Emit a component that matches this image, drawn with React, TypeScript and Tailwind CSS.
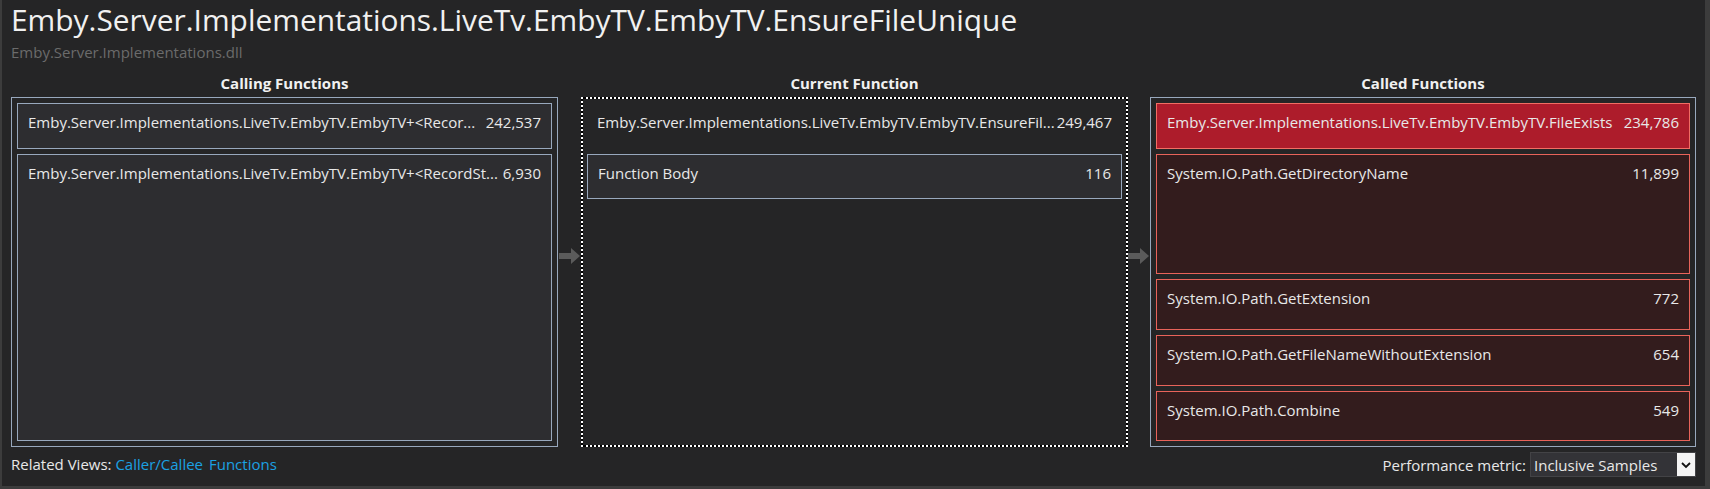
import React from "react";

const font = "font-['Open_Sans','Noto_Sans',sans-serif]";

type Row = { name: string; value: string; h?: string };

function Arrow() {
  return (
    <div className="flex justify-center pt-[150px]">
      <svg width="22" height="18" viewBox="0 0 22 18">
        <path d="M0 6h12V1l9 8-9 8v-5H0z" fill="#5b5b5b" />
      </svg>
    </div>
  );
}

function Box({ row, tone }: { row: Row; tone: "gray" | "hot" | "warm" }) {
  const styles =
    tone === "gray"
      ? "bg-[#2d2d30] border-[#98a8bd]"
      : tone === "hot"
      ? "bg-[#ad1c2b] border-[#f26d63]"
      : "bg-[#331c1d] border-[#e9635a]";
  return (
    <div className={`${styles} ${row.h ?? "flex-1"} border px-[10px] pt-[8px] flex justify-between text-[15px] leading-[20px] text-[#e8e8e8]`}>
      <span className="whitespace-nowrap">{row.name}</span>
      <span className="whitespace-nowrap pl-[1px]">{row.value}</span>
    </div>
  );
}

export default function App() {
  const calling: Row[] = [
    { name: "Emby.Server.Implementations.LiveTv.EmbyTV.EmbyTV+<Recor...", value: "242,537", h: "h-[46px]" },
    { name: "Emby.Server.Implementations.LiveTv.EmbyTV.EmbyTV+<RecordSt...", value: "6,930" },
  ];
  const called: Row[] = [
    { name: "System.IO.Path.GetDirectoryName", value: "11,899", h: "h-[120px]" },
    { name: "System.IO.Path.GetExtension", value: "772", h: "h-[51px]" },
    { name: "System.IO.Path.GetFileNameWithoutExtension", value: "654", h: "h-[51px]" },
    { name: "System.IO.Path.Combine", value: "549" },
  ];

  return (
    <div className={`w-[1710px] h-[489px] bg-[#3c3c3c] pl-[2px] pr-[5px] pb-[3px] ${font}`}>
      <div className="h-full bg-[#252526] px-[9px] flex flex-col text-[#f1f1f1]">
        {/* Title */}
        <div className="h-[42px] pt-[1px] text-[29.9px] leading-[38px] whitespace-nowrap">
          Emby.Server.Implementations.LiveTv.EmbyTV.EmbyTV.EnsureFileUnique
        </div>
        <div className="h-[31px] text-[15px] leading-[20px] text-[#6b6b6b]">Emby.Server.Implementations.dll</div>

        {/* Headers */}
        <div className="h-[24px] flex text-[15px] font-bold leading-[20px]">
          <div className="w-[547px] text-center">Calling Functions</div>
          <div className="w-[23px]" />
          <div className="w-[547px] text-center">Current Function</div>
          <div className="w-[22px]" />
          <div className="flex-1 text-center">Called Functions</div>
        </div>

        {/* Panels */}
        <div className="h-[350px] flex">
          <div className="w-[547px] border border-[#98a8bd] p-[5px] flex flex-col gap-[5px]">
            {calling.map((r) => (
              <Box key={r.name} row={r} tone="gray" />
            ))}
          </div>
          <div className="w-[23px]">
            <Arrow />
          </div>
          <div className="w-[547px] bg-black border-2 border-dotted border-white">
            <div className="h-full bg-[#252526] px-[4px] pt-[4px] flex flex-col gap-[5px]">
              <div className="h-[46px] px-[10px] pt-[9px] flex justify-between text-[15px] leading-[20px] text-[#e8e8e8]">
                <span className="whitespace-nowrap">Emby.Server.Implementations.LiveTv.EmbyTV.EmbyTV.EnsureFil...</span>
                <span>249,467</span>
              </div>
              <Box row={{ name: "Function Body", value: "116", h: "h-[45px]" }} tone="gray" />
            </div>
          </div>
          <div className="w-[22px]">
            <Arrow />
          </div>
          <div className="flex-1 border border-[#98a8bd] p-[5px] flex flex-col gap-[5px]">
            <Box row={{ name: "Emby.Server.Implementations.LiveTv.EmbyTV.EmbyTV.FileExists", value: "234,786", h: "h-[46px]" }} tone="hot" />
            {called.map((r) => (
              <Box key={r.name} row={r} tone="warm" />
            ))}
          </div>
        </div>

        {/* Footer */}
        <div className="flex-1 flex justify-between items-start pt-[5px]">
          <div className="text-[15px] leading-[20px] pt-[2px] text-[#e8e8e8]">
            Related Views: <span className="text-[#1ba1e2]">Caller/Callee</span>{" "}
            <span className="text-[#1ba1e2] ml-[2px]">Functions</span>
          </div>
          <div className="flex items-center text-[15px] leading-[20px] text-[#e8e8e8]">
            <span className="mr-[4px]">Performance metric:</span>
            <div className="w-[166px] h-[25px] bg-[#333337] border border-[#434346] flex items-center justify-between pl-[3px]">
              <span>Inclusive Samples</span>
              <div className="w-[18px] h-[23px] bg-[#f4f4f4] flex items-center justify-center">
                <svg width="10" height="8" viewBox="0 0 10 8">
                  <path d="M1 2l4 4 4-4" fill="none" stroke="#111" strokeWidth="1.8" />
                </svg>
              </div>
            </div>
          </div>
        </div>
      </div>
    </div>
  );
}
